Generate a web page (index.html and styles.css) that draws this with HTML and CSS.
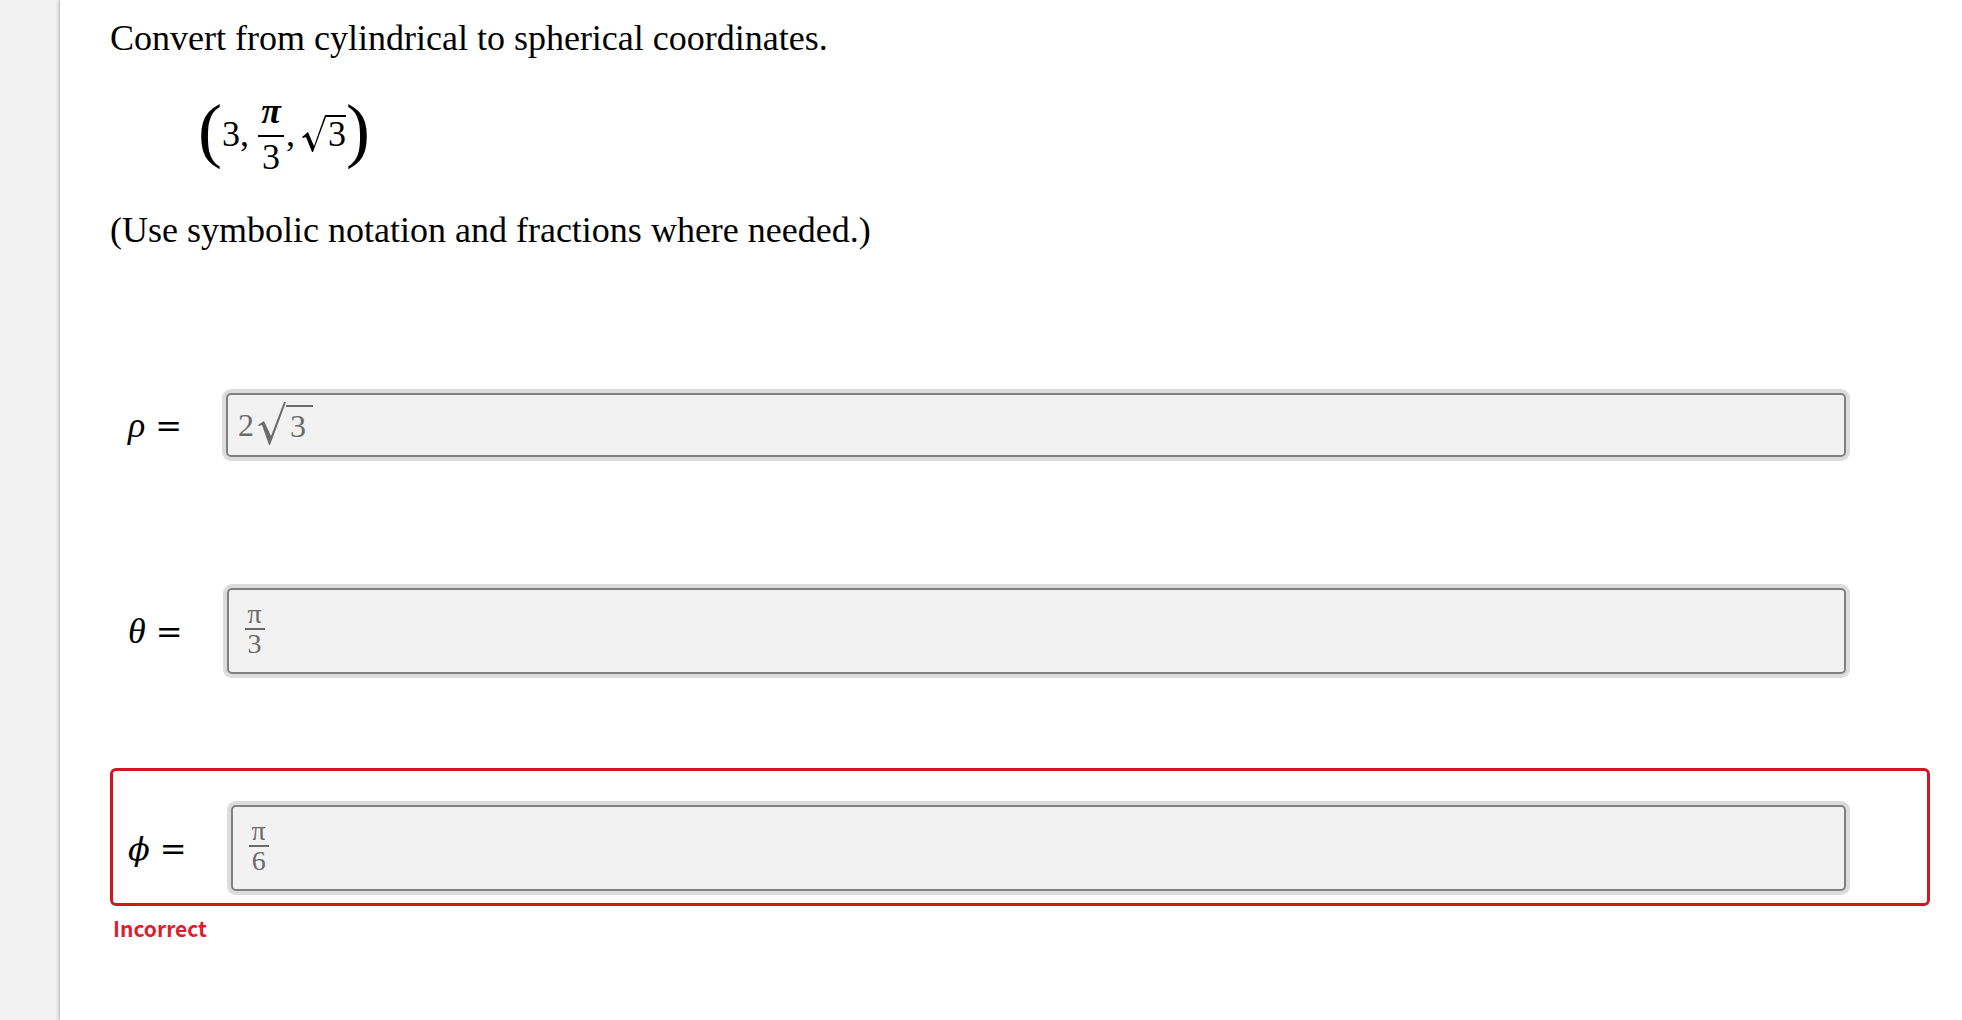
FILE: index.html
```html
<!DOCTYPE html>
<html lang="en">
<head>
  <meta charset="UTF-8">
  <title>Convert from cylindrical to spherical coordinates</title>
  <link rel="stylesheet" href="styles.css">
</head>
<body>
  <main class="question">
    <p class="prompt">Convert from cylindrical to spherical coordinates.</p>

    <div class="expression">
      <span class="paren">(</span>
      <span class="num">3,</span>
      <span class="frac"><i class="pi">π</i><span class="den">3</span></span>
      <span class="num comma">,</span>
      <span class="root">
        <svg class="radical" width="26" height="38" viewBox="0 0 26 38"><path d="M0 22 L6 17 L12 31 L23 0 L26 0 L26 2 L24 2 L11 37 L10 37 L4 22 L1 23 Z"/></svg>
        <span class="radicand">3</span>
      </span>
      <span class="paren">)</span>
    </div>

    <p class="prompt">(Use symbolic notation and fractions where needed.)</p>

    <form class="answers">
      <div class="answer">
        <label for="rho"><i>ρ</i> <span class="eq">=</span></label>
        <div class="field">
          <input type="text" id="rho" disabled>
          <span class="math">
            2<span class="root">
              <svg class="radical" width="28" height="43" viewBox="0 0 28 43"><path d="M0 23 L6 19 L13 34 L26 0 L28 0 L12 43 L11 43 L4 23 L1 24 Z"/></svg>
              <span class="radicand">3</span>
            </span>
          </span>
        </div>
      </div>

      <div class="answer">
        <label for="theta"><i>θ</i> <span class="eq">=</span></label>
        <div class="field tall">
          <input type="text" id="theta" disabled>
          <span class="math"><span class="frac"><span>π</span><span class="den">3</span></span></span>
        </div>
      </div>

      <div class="answer incorrect">
        <label for="phi"><i class="phi">ϕ</i> <span class="eq">=</span></label>
        <div class="field tall">
          <input type="text" id="phi" disabled>
          <span class="math"><span class="frac"><span>π</span><span class="den">6</span></span></span>
        </div>
      </div>
      <p class="feedback">Incorrect</p>
    </form>
  </main>
</body>
</html>
```

FILE: styles.css
```css
* { box-sizing: border-box; }
body { margin: 0; padding-left: 60px; background: #f2f2f2; font-family: "Liberation Serif", serif; font-size: 36px; line-height: 40px; color: #000; }
.question { min-height: 100vh; padding: 18px 32px 40px 50px; background: #fff; box-shadow: 0 0 4px rgba(0, 0, 0, 0.45); }
.prompt { margin: 0; }
.phi { font-family: "DejaVu Serif", serif; font-size: 32px; }
.pi { font-weight: bold; }

/* given point */
.expression { display: flex; align-items: center; height: 68px; margin: 42px 0; padding-left: 88px; }
.paren { padding-bottom: 8px; font-size: 72px; line-height: 68px; }
.comma { margin: 0 7px 0 2px; }
.frac { display: flex; flex-direction: column; align-items: center; }
.expression .frac { width: 26px; margin-left: 9px; }
.den { align-self: stretch; border-top: 2px solid; text-align: center; }
.expression .den { margin-top: 4px; }
.root { display: inline-flex; align-items: flex-start; }
.radical { display: block; flex: none; fill: currentColor; }
.radicand { border-top: 2px solid; line-height: 34px; }

/* answer rows */
.answers { display: flex; flex-direction: column; margin-top: 106px; }
.answer { display: flex; align-items: center; margin-bottom: 79px; padding: 34px 81px 12px 15px; border: 3px solid transparent; border-radius: 6px; }
.answer label { margin-right: 44px; white-space: nowrap; }
.eq { margin-left: 1px; font-family: "DejaVu Serif", serif; font-size: 32px; }
.field { display: grid; flex: 1; height: 64px; }
.field.tall { height: 86px; }
.field input, .math { grid-area: 1 / 1; min-width: 0; }
.field input { width: 100%; height: 100%; margin: 0; border: 2px solid #808080; border-radius: 5px; background: #f2f2f2; box-shadow: 0 0 0 4px #dcdcdc; }
.math { display: flex; align-items: center; padding-left: 12px; font-size: 32px; color: #6b6b6b; pointer-events: none; }
.field .root { margin-left: 4px; padding-bottom: 4px; }
.field .radicand { margin-top: 3px; padding: 0 7px 0 4px; line-height: 38px; }
.field .frac { width: 20px; margin-left: 6px; padding-bottom: 4px; font-size: 28px; line-height: 28px; }

.incorrect { margin-bottom: 0; border-color: #d0161f; }
.feedback { margin: 6px 0 0 3px; font-family: "Noto Sans CJK SC", sans-serif; font-size: 21px; font-weight: 700; line-height: 32px; color: #dc1f30; }
```
